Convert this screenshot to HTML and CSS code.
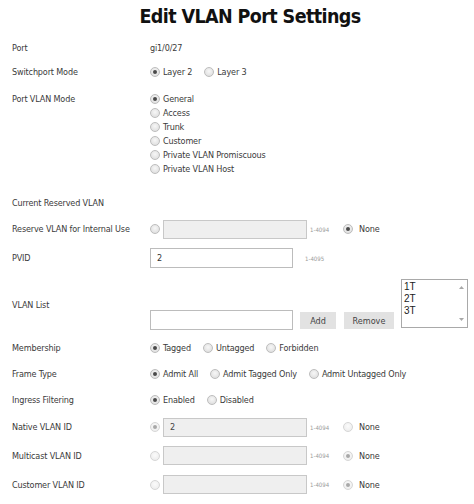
FILE: index.html
```html
<!DOCTYPE html>
<html>
<head>
<meta charset="utf-8">
<link rel="stylesheet" href="styles.css">
</head>
<body>
<h1 class="title">Edit VLAN Port Settings</h1>
<div class="form">
  <div class="row h24"><div class="label">Port</div><div class="value">gi1/0/27</div></div>
  <div class="row h24"><div class="label">Switchport Mode</div>
    <div class="value group">
      <span class="opt"><span class="radio on"></span>Layer 2</span>
      <span class="opt"><span class="radio"></span>Layer 3</span>
    </div>
  </div>
  <div class="row stack"><div class="label">Port VLAN Mode</div>
    <div class="value options">
      <span class="opt"><span class="radio on"></span>General</span>
      <span class="opt"><span class="radio"></span>Access</span>
      <span class="opt"><span class="radio"></span>Trunk</span>
      <span class="opt"><span class="radio"></span>Customer</span>
      <span class="opt"><span class="radio"></span>Private VLAN Promiscuous</span>
      <span class="opt"><span class="radio"></span>Private VLAN Host</span>
    </div>
  </div>
  <div class="row h24 mt15"><div class="label">Current Reserved VLAN</div><div class="value"></div></div>
  <div class="row h28"><div class="label">Reserve VLAN for Internal Use</div>
    <div class="value field">
      <span class="radio"></span>
      <input class="text disabled" type="text" value="" disabled>
      <span class="range">1-4094</span>
      <span class="opt none"><span class="radio on"></span>None</span>
    </div>
  </div>
  <div class="row h30"><div class="label">PVID</div>
    <div class="value field">
      <input class="text pvid" type="text" value="2">
      <span class="range wide">1-4095</span>
    </div>
  </div>
  <div class="row vlanlist"><div class="label">VLAN List</div>
    <div class="value listfield">
      <input class="text pvid" type="text" value="">
      <button class="btn add">Add</button>
      <button class="btn remove">Remove</button>
      <div class="listbox">
        <div class="items"><div>1T</div><div>2T</div><div>3T</div></div>
        <div class="scroll">
          <svg width="5" height="3" viewBox="0 0 5 3"><path d="M0 3 L2.5 0 L5 3 Z" fill="#a8a8a8"/></svg>
          <svg width="5" height="3" viewBox="0 0 5 3"><path d="M0 0 L2.5 3 L5 0 Z" fill="#a8a8a8"/></svg>
        </div>
      </div>
    </div>
  </div>
  <div class="row h26 mt5"><div class="label">Membership</div>
    <div class="value group">
      <span class="opt"><span class="radio on"></span>Tagged</span>
      <span class="opt"><span class="radio"></span>Untagged</span>
      <span class="opt"><span class="radio"></span>Forbidden</span>
    </div>
  </div>
  <div class="row h26"><div class="label">Frame Type</div>
    <div class="value group">
      <span class="opt"><span class="radio on"></span>Admit All</span>
      <span class="opt"><span class="radio"></span>Admit Tagged Only</span>
      <span class="opt"><span class="radio"></span>Admit Untagged Only</span>
    </div>
  </div>
  <div class="row h26"><div class="label">Ingress Filtering</div>
    <div class="value group">
      <span class="opt"><span class="radio on"></span>Enabled</span>
      <span class="opt"><span class="radio"></span>Disabled</span>
    </div>
  </div>
  <div class="row h28"><div class="label">Native VLAN ID</div>
    <div class="value field">
      <span class="radio on faint"></span>
      <input class="text disabled" type="text" value="2" disabled>
      <span class="range">1-4094</span>
      <span class="opt none"><span class="radio faint"></span>None</span>
    </div>
  </div>
  <div class="row h29"><div class="label">Multicast VLAN ID</div>
    <div class="value field">
      <span class="radio faint"></span>
      <input class="text disabled" type="text" value="" disabled>
      <span class="range">1-4094</span>
      <span class="opt none"><span class="radio on faint"></span>None</span>
    </div>
  </div>
  <div class="row h29"><div class="label">Customer VLAN ID</div>
    <div class="value field">
      <span class="radio faint"></span>
      <input class="text disabled" type="text" value="" disabled>
      <span class="range">1-4094</span>
      <span class="opt none"><span class="radio on faint"></span>None</span>
    </div>
  </div>
</div>
</body>
</html>
```

FILE: styles.css
```css
html, body {
  margin: 0;
  padding: 0;
  background: #ffffff;
}
body {
  width: 474px;
  height: 504px;
  overflow: hidden;
  font-family: "DejaVu Sans", "Liberation Sans", sans-serif;
  font-stretch: condensed;
  font-size: 9px;
  letter-spacing: -0.15px;
  color: #3a3a3a;
}
.title {
  margin: 0;
  height: 36px;
  line-height: 34px;
  padding-left: 26px;
  text-align: center;
  font-size: 19.5px;
  letter-spacing: -0.6px;
  font-weight: bold;
  color: #111;
  font-family: "DejaVu Sans", "Liberation Sans", sans-serif;
  font-stretch: condensed;
}
.form {
  display: flex;
  flex-direction: column;
}
.row {
  display: flex;
  align-items: center;
}
.h24 { height: 24px; }
.h26 { height: 26px; }
.h28 { height: 28px; }
.h29 { height: 29px; }
.h30 { height: 30px; }
.mt15 { margin-top: 15px; }
.mt5 { margin-top: 5px; }
.label {
  width: 138px;
  padding-left: 12px;
  flex: none;
  white-space: nowrap;
}
.value {
  flex: 1;
  display: flex;
  align-items: center;
  white-space: nowrap;
}
.group { gap: 12px; }
.opt {
  display: inline-flex;
  align-items: center;
  gap: 3px;
}
.stack {
  align-items: flex-start;
  padding-top: 8px;
}
.stack .label { line-height: 14px; }
.options {
  flex-direction: column;
  align-items: flex-start;
}
.options .opt { height: 14px; }
.radio {
  width: 8px;
  height: 8px;
  border-radius: 50%;
  border: 1px solid #bdbdbd;
  background: radial-gradient(circle at 50% 40%, #f7f7f7 0%, #e2e2e2 70%, #d0d0d0 100%);
  flex: none;
  position: relative;
  box-sizing: content-box;
}
.radio.on::after {
  content: "";
  position: absolute;
  left: 2px;
  top: 2px;
  width: 4px;
  height: 4px;
  border-radius: 50%;
  background: #4a4a4a;
}
.radio.faint {
  border-color: #d6d6d6;
  background: radial-gradient(circle at 50% 40%, #fbfbfb 0%, #eeeeee 75%, #e2e2e2 100%);
}
.radio.faint.on::after { background: #a8a8a8; }
.text {
  box-sizing: border-box;
  height: 19px;
  border: 1px solid #c4c4c4;
  padding: 0 6px;
  font: inherit;
  font-size: 9px;
  color: #333;
  margin: 0;
  outline: none;
}
.field .radio { margin-right: 3px; }
.text.disabled {
  width: 144px;
  background: #efefef;
  border-color: #c8c8c8;
  color: #444;
}
.text.pvid {
  width: 143px;
  height: 20px;
  background: #fff;
  border-color: #bcbcbc;
}
.range {
  font-size: 6px;
  letter-spacing: 0;
  color: #9a9a9a;
  margin-left: 3px;
  width: 33px;
}
.range.wide { margin-left: 12px; }
.none { margin-left: 0; }
.vlanlist {
  height: 51px;
  margin-top: 6px;
}
.listfield { align-items: flex-end; height: 51px; }
.btn {
  box-sizing: border-box;
  height: 17px;
  margin: 0 0 1px 0;
  padding: 0;
  border: none;
  background: #e2e2e2;
  font: inherit;
  font-size: 9px;
  color: #444;
}
.add { width: 36px; margin-left: 7px; }
.remove { width: 50px; margin-left: 8px; }
.listbox {
  box-sizing: border-box;
  align-self: flex-start;
  width: 67px;
  height: 49px;
  margin-left: 7px;
  border: 1px solid #a9a9a9;
  display: flex;
  background: #fff;
}
.items {
  flex: 1;
  padding: 1px 0 0 2px;
  font-family: "Liberation Sans", "DejaVu Sans", sans-serif;
  font-stretch: normal;
  letter-spacing: 0;
  font-size: 10px;
  line-height: 12px;
  color: #222;
}
.scroll {
  width: 12px;
  display: flex;
  flex-direction: column;
  justify-content: space-between;
  align-items: center;
  padding: 6px 0 6px 0;
}
```
